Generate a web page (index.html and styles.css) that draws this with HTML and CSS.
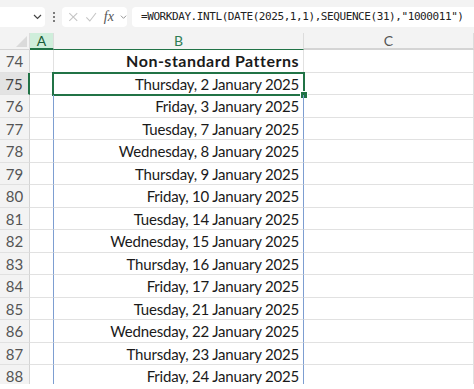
FILE: index.html
```html
<!DOCTYPE html>
<html>
<head>
<meta charset="utf-8">
<link rel="stylesheet" href="styles.css">
</head>
<body>
<div class="app">
  <div class="fbar">
    <div class="namebox">
      <svg class="chev" width="9" height="6" viewBox="0 0 9 6"><path d="M1 1l3.5 3.5L8 1" fill="none" stroke="#444" stroke-width="1.2"/></svg>
    </div>
    <div class="vdots"><span></span><span></span><span></span></div>
    <div class="fxbox">
      <svg width="12" height="12" viewBox="0 0 12 12"><path d="M1.5 1.5l9 9M10.5 1.5l-9 9" stroke="#c4c4c4" stroke-width="1.2" fill="none"/></svg>
      <svg width="14" height="12" viewBox="0 0 14 12"><path d="M1.5 6.5l4 4 7-9" stroke="#c4c4c4" stroke-width="1.2" fill="none"/></svg>
      <span class="fx">fx</span>
      <svg width="8" height="6" viewBox="0 0 8 6"><path d="M1 1.5l3 3 3-3" fill="none" stroke="#888" stroke-width="1"/></svg>
    </div>
    <div class="formula">=WORKDAY.INTL(DATE(2025,1,1),SEQUENCE(31),"1000011")</div>
  </div>
  <div class="sheet">
    <div class="grid">
      <div class="corner"><span class="tri"></span></div>
      <div class="ch cha">A</div>
      <div class="ch chb">B</div>
      <div class="ch chc">C</div>

      <div class="rh">74</div><div class="c"></div><div class="c b hdr">Non-standard Patterns</div><div class="c"></div>
      <div class="rh sel">75</div><div class="c"></div><div class="c b sp active">Thursday, 2 January 2025<span class="handle"></span></div><div class="c"></div>
      <div class="rh">76</div><div class="c"></div><div class="c b sp">Friday, 3 January 2025</div><div class="c"></div>
      <div class="rh">77</div><div class="c"></div><div class="c b sp">Tuesday, 7 January 2025</div><div class="c"></div>
      <div class="rh">78</div><div class="c"></div><div class="c b sp">Wednesday, 8 January 2025</div><div class="c"></div>
      <div class="rh">79</div><div class="c"></div><div class="c b sp">Thursday, 9 January 2025</div><div class="c"></div>
      <div class="rh">80</div><div class="c"></div><div class="c b sp">Friday, 10 January 2025</div><div class="c"></div>
      <div class="rh">81</div><div class="c"></div><div class="c b sp">Tuesday, 14 January 2025</div><div class="c"></div>
      <div class="rh">82</div><div class="c"></div><div class="c b sp">Wednesday, 15 January 2025</div><div class="c"></div>
      <div class="rh">83</div><div class="c"></div><div class="c b sp">Thursday, 16 January 2025</div><div class="c"></div>
      <div class="rh">84</div><div class="c"></div><div class="c b sp">Friday, 17 January 2025</div><div class="c"></div>
      <div class="rh">85</div><div class="c"></div><div class="c b sp">Tuesday, 21 January 2025</div><div class="c"></div>
      <div class="rh">86</div><div class="c"></div><div class="c b sp">Wednesday, 22 January 2025</div><div class="c"></div>
      <div class="rh">87</div><div class="c"></div><div class="c b sp">Thursday, 23 January 2025</div><div class="c"></div>
      <div class="rh">88</div><div class="c"></div><div class="c b sp">Friday, 24 January 2025</div><div class="c"></div>
    </div>
  </div>
</div>
</body>
</html>
```

FILE: styles.css
```css
* { box-sizing: border-box; }
html, body { margin: 0; padding: 0; background: #fff; }
.app { width: 474px; height: 389px; overflow: hidden; font-family: "Lato", "Open Sans", sans-serif; }

.fbar {
  height: 33px;
  background: #f3f3f3;
  display: flex;
  align-items: center;
  padding-top: 1px;
}
.namebox {
  width: 45px; height: 20px;
  background: #fff;
  border-radius: 0 4px 4px 0;
  display: flex; align-items: center; justify-content: flex-end;
  padding-right: 3px;
}
.vdots { width: 17px; display: flex; flex-direction: column; align-items: center; gap: 2px; }
.vdots span { width: 2px; height: 2px; background: #555; border-radius: 1px; }
.fxbox {
  width: 65px; height: 20px; background: #fff; border-radius: 4px;
  display: flex; align-items: center; gap: 6px; padding-left: 6px;
}
.fx { font-family: "Liberation Serif", serif; font-style: italic; font-size: 14px; color: #555; margin-left: 1px; }
.formula {
  flex: 1; height: 20px; margin-left: 5px; background: #fff; border-radius: 4px 0 0 4px;
  font-family: "DejaVu Sans Mono", monospace; font-size: 11px; letter-spacing: -0.42px;
  color: #222; line-height: 20px; padding-left: 9px; white-space: nowrap; overflow: hidden;
}

.sheet { height: 351px; overflow: hidden; }
.grid {
  display: grid;
  grid-template-columns: 30px 24px 250px 1fr;
  grid-template-rows: 17px repeat(15, 22.5px);
}
.corner { background: #f3f3f3; border-right: 1px solid #dcdcdc; border-bottom: 1px solid #d4d4d4; position: relative; }
.tri { position: absolute; right: 2px; bottom: 2px; width: 0; height: 0;
  border-left: 11px solid transparent; border-bottom: 11px solid #dadada; }
.ch {
  background: #f3f3f3; font-size: 14px; color: #555; text-align: center; line-height: 15px;
  border-right: 1px solid #dcdcdc; border-bottom: 2px solid #d4d4d4;
}
.cha { background: #cfeedb; color: #185c37; border-bottom-color: #217346; }
.chb { color: #2e7d55; border-bottom: 1px solid #217346; line-height: 16px; }
.rh {
  background: #f3f3f3; color: #555; font-size: 15px; text-align: center; line-height: 22px;
  border-right: 1px solid #d4d4d4; border-bottom: 1px solid #e1e1e1;
}
.rh.sel { background: #e3e3e3; border-right: 2px solid #217346; color: #444; }
.c { border-right: 1px solid #e1e1e1; border-bottom: 1px solid #e1e1e1; }
.b {
  font-size: 15px; color: #1a1a1a; text-align: right; padding-right: 4px; line-height: 22px;
  white-space: nowrap; position: relative; letter-spacing: -0.2px;
}
.hdr { font-weight: bold; font-size: 16px; letter-spacing: 0.5px; border-right-color: #e1e1e1; }
.sp { border-left: 1px solid #7d9ed1; border-right: 1px solid #7d9ed1; margin-left: -1px; }
.active { outline: 2px solid #217346; outline-offset: -1px; }
.handle { position: absolute; right: -4px; bottom: -4px; width: 6px; height: 6px; background: #217346; border: 1px solid #fff; box-sizing: content-box; margin: -1px; }
```
